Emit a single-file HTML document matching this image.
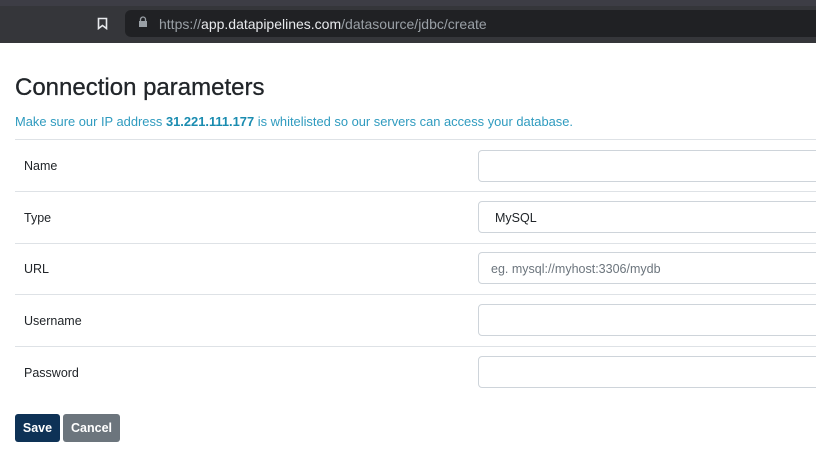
<!DOCTYPE html>
<html><head><style>
body{margin:0;width:816px;height:454px;overflow:hidden;background:#fff;font-family:"Liberation Sans",sans-serif;position:relative}
.top{position:absolute;left:0;top:0;width:816px;height:6px;background:#3d3d45}
.bar{position:absolute;left:0;top:6px;width:816px;height:37px;background:#35363a}
.pill{position:absolute;left:125px;top:10px;width:700px;height:27px;background:#202124;border-radius:6px}
.url{position:absolute;left:159px;top:16px;font-size:14px;color:#9aa0a6}
.url b{font-weight:normal;color:#e8eaed}
h1{position:absolute;left:15px;top:74px;margin:0;font-size:24px;font-weight:normal;color:#212529;-webkit-text-stroke:.3px #212529}
.note{position:absolute;left:15px;top:114px;font-size:12.9px;color:#2f9bbf}
.note b{color:#1a8cb0}
.line{position:absolute;left:15px;width:801px;height:1px;background:#dee2e6}
.lab{position:absolute;left:24px;font-size:12.5px;color:#212529}
.inp{position:absolute;left:478px;width:350px;height:32px;border:1px solid #ced4da;border-radius:4px;box-sizing:border-box;font-size:12.5px;padding:9px 0 0 0}
.btn{position:absolute;top:414px;height:28px;border-radius:3px;color:#fff;font-size:12.5px;font-weight:bold;text-align:center;line-height:29px}
</style></head><body>
<div class="top"></div><div class="bar"></div><div class="pill"></div>
<svg style="position:absolute;left:97px;top:17px" width="11" height="13"><path d="M1.5 1.5h8v10l-4-3-4 3z" fill="none" stroke="#e8eaed" stroke-width="1.6"/></svg>
<svg style="position:absolute;left:138px;top:16px" width="10" height="12"><rect x="1" y="5" width="8" height="6" fill="#9aa0a6"/><path d="M2.5 5V3.5a2.5 2.5 0 0 1 5 0V5" fill="none" stroke="#9aa0a6" stroke-width="1.3"/></svg>
<div class="url">https://<b>app.datapipelines.com</b>/datasource/jdbc/create</div>
<h1>Connection parameters</h1>
<div class="note">Make sure our IP address <b>31.221.111.177</b> is whitelisted so our servers can access your database.</div>
<div class="line" style="top:139px"></div>
<div class="line" style="top:191px"></div>
<div class="line" style="top:243px"></div>
<div class="line" style="top:294px"></div>
<div class="line" style="top:346px"></div>
<div class="lab" style="top:159px">Name</div>
<div class="lab" style="top:211px">Type</div>
<div class="lab" style="top:262px">URL</div>
<div class="lab" style="top:314px">Username</div>
<div class="lab" style="top:366px">Password</div>
<div class="inp" style="top:150px"></div>
<div class="inp" style="top:201px;padding-left:16px;color:#212529">MySQL</div>
<div class="inp" style="top:252px;padding-left:12px;color:#6c757d">eg. mysql://myhost:3306/mydb</div>
<div class="inp" style="top:304px"></div>
<div class="inp" style="top:356px"></div>
<div class="btn" style="left:15px;width:45px;background:#0e3256">Save</div>
<div class="btn" style="left:63px;width:57px;background:#6c757d">Cancel</div>
</body></html>
